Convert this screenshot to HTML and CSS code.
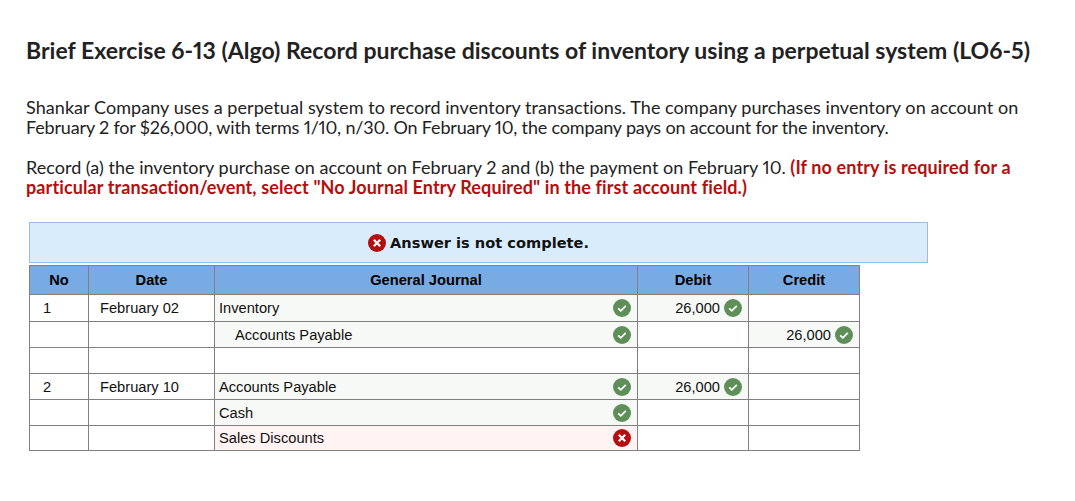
FILE: index.html
```html
<!DOCTYPE html>
<html lang="en">
<head>
    <meta charset="UTF-8">
    <title>Brief Exercise 6-13 (Algo)</title>
    <link rel="stylesheet" href="styles.css">
</head>
<body>
    <svg class="icon-defs" width="0" height="0">
        <symbol id="icon-ok" viewBox="0 0 18 18">
            <circle cx="9" cy="9" r="9" fill="#5f8f58"/>
            <path d="M5.2 9.4l2.6 2.4 5-5" fill="none" stroke="#fff" stroke-width="1.8"/>
        </symbol>
        <symbol id="icon-bad" viewBox="0 0 18 18">
            <circle cx="9" cy="9" r="9" fill="#b50e0e"/>
            <path d="M5.8 5.8l6.4 6.4M12.2 5.8l-6.4 6.4" fill="none" stroke="#fff" stroke-width="2.2"/>
        </symbol>
    </svg>

    <h1 class="title">Brief Exercise 6-13 (Algo) Record purchase discounts of inventory using a perpetual system (LO6-5)</h1>

    <p class="text"><span class="line-wide">Shankar Company uses a perpetual system to record inventory transactions. The company purchases inventory on account on</span><br><span class="line-tight">February 2 for $26,000, with terms 1/10, n/30. On February 10, the company pays on account for the inventory.</span></p>

    <p class="text text-second">Record (a) the inventory purchase on account on February 2 and (b) the payment on February 10. <strong class="note">(If no entry is required for a<br>particular transaction/event, select "No Journal Entry Required" in the first account field.)</strong></p>

    <div class="banner">
        <svg class="icon"><use href="#icon-bad"/></svg>
        <span>Answer is not complete.</span>
    </div>

    <table class="journal">
        <colgroup>
            <col class="col-no">
            <col class="col-date">
            <col class="col-account">
            <col class="col-amount">
            <col class="col-amount">
        </colgroup>
        <thead>
            <tr>
                <th>No</th>
                <th>Date</th>
                <th>General Journal</th>
                <th>Debit</th>
                <th>Credit</th>
            </tr>
        </thead>
        <tbody>
            <tr class="row-a">
                <td class="no">1</td>
                <td class="date">February 02</td>
                <td class="account ok"><div class="cell"><span>Inventory</span><svg class="icon"><use href="#icon-ok"/></svg></div></td>
                <td class="amount ok"><div class="cell-amount"><span>26,000</span><svg class="icon"><use href="#icon-ok"/></svg></div></td>
                <td></td>
            </tr>
            <tr class="row-b">
                <td></td>
                <td></td>
                <td class="account ok"><div class="cell"><span class="indent">Accounts Payable</span><svg class="icon"><use href="#icon-ok"/></svg></div></td>
                <td></td>
                <td class="amount ok"><div class="cell-amount"><span>26,000</span><svg class="icon"><use href="#icon-ok"/></svg></div></td>
            </tr>
            <tr class="row-b">
                <td></td>
                <td></td>
                <td></td>
                <td></td>
                <td></td>
            </tr>
            <tr class="row-b">
                <td class="no">2</td>
                <td class="date">February 10</td>
                <td class="account ok"><div class="cell"><span>Accounts Payable</span><svg class="icon"><use href="#icon-ok"/></svg></div></td>
                <td class="amount ok"><div class="cell-amount"><span>26,000</span><svg class="icon"><use href="#icon-ok"/></svg></div></td>
                <td></td>
            </tr>
            <tr class="row-b">
                <td></td>
                <td></td>
                <td class="account ok"><div class="cell"><span>Cash</span><svg class="icon"><use href="#icon-ok"/></svg></div></td>
                <td></td>
                <td></td>
            </tr>
            <tr class="row-c">
                <td></td>
                <td></td>
                <td class="account bad"><div class="cell"><span>Sales Discounts</span><svg class="icon"><use href="#icon-bad"/></svg></div></td>
                <td></td>
                <td></td>
            </tr>
        </tbody>
    </table>
</body>
</html>
```

FILE: styles.css
```css
body {
    font-family: Lato, "Liberation Sans", sans-serif;
    font-variant-numeric: proportional-nums;
    background-color: #fff;
    color: #222;
    margin: 0;
    padding: 37px 0 0 26px;
}

.icon-defs {
    display: block;
    height: 0;
}

.title {
    margin: 0;
    font-size: 23px;
    line-height: 26px;
    font-weight: 700;
    letter-spacing: 0.02px;
    white-space: nowrap;
}

.text {
    margin: 34px 0 0;
    font-size: 18px;
    line-height: 20px;
    letter-spacing: 0.02px;
    white-space: nowrap;
}

.text-second {
    margin-top: 20px;
}

.line-wide {
    letter-spacing: 0.06px;
}

.line-tight {
    letter-spacing: -0.17px;
}

.note {
    color: #b50e0e;
    font-weight: 700;
    letter-spacing: 0.12px;
}

.banner {
    box-sizing: border-box;
    width: 899px;
    height: 41px;
    margin: 25px 0 2px 3px;
    background-color: #d9ecfb;
    border: 1px solid #9bbde0;
    display: flex;
    align-items: center;
    justify-content: center;
    gap: 4px;
    font-family: "DejaVu Sans", sans-serif;
    font-size: 14.6px;
    font-weight: 700;
    color: #111;
}

.icon {
    width: 18px;
    height: 18px;
    flex: none;
}

.journal {
    margin-left: 3px;
    width: 831px;
    table-layout: fixed;
    border-collapse: collapse;
    font-family: "Liberation Sans", Arial, sans-serif;
    font-size: 14.67px;
    color: #111;
}

.col-no {
    width: 59px;
}

.col-date {
    width: 126px;
}

.col-account {
    width: 423px;
}

.col-amount {
    width: 111px;
}

.journal th,
.journal td {
    border: 1px solid #808080;
    padding: 0;
}

.journal th {
    height: 28px;
    background-color: #78abe4;
    font-weight: 700;
    color: #000;
}

.row-a td {
    height: 26px;
}

.row-b td {
    height: 25px;
}

.row-c td {
    height: 24px;
}

.no {
    text-align: left;
    padding-left: 13px !important;
}

.date {
    padding-left: 11px !important;
}

.account {
    padding: 0 6px 0 4px !important;
}

.amount {
    padding-right: 6px !important;
}

.ok {
    background-color: #f7f9f6;
}

.bad {
    background-color: #fff4f3;
}

.cell {
    display: flex;
    align-items: center;
    justify-content: space-between;
}

.cell-amount {
    display: flex;
    align-items: center;
    justify-content: flex-end;
    gap: 4px;
}

.indent {
    margin-left: 16px;
}
```
